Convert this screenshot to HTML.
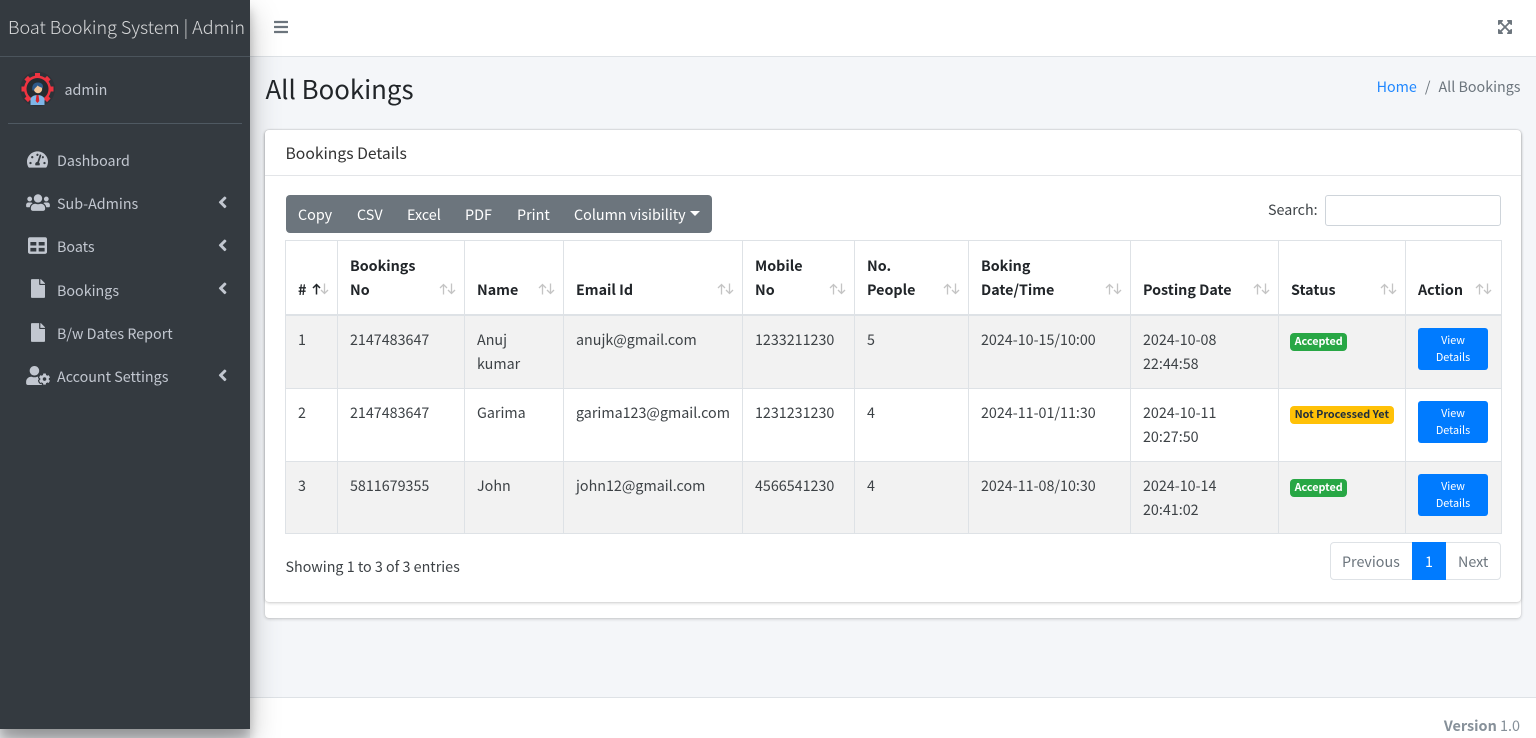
<!DOCTYPE html>
<html><head><meta charset="utf-8"><title>All Bookings</title>
<style>
*{box-sizing:border-box}
html{background:#f4f6f9}
html,body{margin:0;padding:0;width:1536px;height:738px;overflow:hidden}
body{font-family:"Noto Sans CJK JP","Liberation Sans",sans-serif;font-size:14.3px;line-height:24px;color:#212529;position:relative;background:#f4f6f9;filter:blur(.3px)}
.a{position:absolute;white-space:nowrap}
svg{position:absolute;display:block}
#nav{left:250px;top:0;width:1286px;height:57px;background:#fff;border-bottom:1px solid #dee2e6}
#foot{left:250px;top:697px;width:1286px;height:41px;background:#fff;border-top:1px solid #dee2e6}
#side{left:0;top:0;width:250px;height:729px;background:#343a40;box-shadow:0 14px 28px rgba(0,0,0,.25),0 10px 10px rgba(0,0,0,.22)}
.m{color:#c2c7d0;left:57px}
.card{left:265px;width:1256px;background:#fff;border-radius:4px;box-shadow:0 0 1px rgba(0,0,0,.125),0 1px 3px rgba(0,0,0,.2)}
table{position:absolute;left:285px;top:240px;width:1216px;border-collapse:collapse;table-layout:fixed;color:#3d4246}
th,td{border:1px solid #dee2e6;vertical-align:top;text-align:left;font-weight:400;line-height:24px;position:relative}
th{vertical-align:bottom;font-weight:700;color:#212529;border-bottom-width:2px;height:74px;padding:11px 12px 12px 12px}
tbody tr:nth-child(odd) td{background:#f2f2f2}
tbody tr{height:73px}
tbody tr:last-child{height:72px}
td{padding:12.500px 12px 11.500px}
tbody tr:last-child td{padding-bottom:10.500px}
.s{position:absolute;right:8px;bottom:19px;width:17px;height:12px}
.badge{position:absolute;left:11px;top:17px;height:18px;border-radius:4px;font-size:10.800px;font-weight:700;line-height:17px;padding:0 4.600px;white-space:nowrap}
.g{background:#28a745;color:#fff}.y{background:#ffc107;color:#1f2d3d}
.v{position:absolute;left:12px;top:12px;width:70px;height:42px;background:#007bff;border-radius:3px;color:#fff;font-size:10.800px;line-height:17.500px;text-align:center;padding-top:4px}
.b{color:#fff;top:203px;font-size:14.350px}
</style></head><body>

<div class="a" id="nav"></div>
<svg style="left:274px;top:19px" width="14" height="16" viewBox="0 0 448 512" fill="#6c757d"><path d="M16 132h416c8.837 0 16-7.163 16-16V76c0-8.837-7.163-16-16-16H16C7.163 60 0 67.163 0 76v40c0 8.837 7.163 16 16 16zm0 160h416c8.837 0 16-7.163 16-16v-40c0-8.837-7.163-16-16-16H16c-8.837 0-16 7.163-16 16v40c0 8.837 7.163 16 16 16zm0 160h416c8.837 0 16-7.163 16-16v-40c0-8.837-7.163-16-16-16H16c-8.837 0-16 7.163-16 16v40c0 8.837 7.163 16 16 16z"/></svg>
<svg style="left:1498px;top:19px" width="14" height="16" viewBox="0 0 448 512" fill="#6c757d"><path d="M448 344v112a23.94 23.94 0 0 1-24 24H312c-21.39 0-32.09-25.9-17-41l36.2-36.2L224 295.6 116.77 402.9 153 439c15.09 15.1 4.39 41-17 41H24a23.94 23.94 0 0 1-24-24V344c0-21.4 25.89-32.1 41-17l36.19 36.2L184.46 256 77.18 148.7 41 185c-15.1 15.1-41 4.4-41-17V56a23.94 23.94 0 0 1 24-24h112c21.39 0 32.09 25.9 17 41l-36.2 36.2L224 216.4l107.23-107.3L295 73c-15.09-15.1-4.39-41 17-41h112a23.94 23.94 0 0 1 24 24v112c0 21.4-25.89 32.1-41 17l-36.19-36.2L263.54 256l107.28 107.3L407 327.1c15.1-15.2 41-4.5 41 16.9z"/></svg>

<div class="a" id="foot"></div>
<div class="a" style="right:16px;top:714px;color:#869099;font-size:14.400px"><b>Version</b> 1.0</div>

<div class="a" id="side"></div>
<div class="a" style="left:8px;top:12px;font-size:17.950px;line-height:30px;font-weight:300;color:rgba(255,255,255,.8)">Boat Booking System | Admin</div>
<div class="a" style="left:0;top:56px;width:250px;height:1px;background:#4b545c"></div>
<svg style="left:19.500px;top:70px" width="35" height="38" viewBox="0 0 35 38">
<circle cx="17.500" cy="19" r="17.500" fill="#2d3238"/>
<g fill="#ef3340"><circle cx="17.500" cy="19" r="13.500"/><rect x="15" y="3" width="5" height="5"/><rect x="15" y="30" width="5" height="5"/><rect x="1.500" y="16.500" width="5" height="5"/><rect x="28.500" y="16.500" width="5" height="5"/><rect x="15" y="3" width="5" height="5" transform="rotate(45 17.500 19)"/><rect x="15" y="30" width="5" height="5" transform="rotate(45 17.500 19)"/><rect x="1.500" y="16.500" width="5" height="5" transform="rotate(45 17.500 19)"/><rect x="28.500" y="16.500" width="5" height="5" transform="rotate(45 17.500 19)"/></g>
<circle cx="17.500" cy="19" r="11" fill="#262b30"/>
<path d="M10.500 35v-5.500c0-2.500 3-4.500 7-4.500s7 2 7 4.500V35z" fill="#7fb5e6"/>
<path d="M16.500 25h2l.8 6-1.800 2-1.800-2z" fill="#d8232a"/>
<circle cx="18" cy="19" r="4.200" fill="#f2c79c"/>
<path d="M12.500 20.500c-1.200-5 1.500-8.500 6-8 3 .3 5 2 4.500 5.500-2-.5-4-1.200-5.500-2.500-1 2-3 2.200-3.500 5z" fill="#2f5a8a"/>
</svg>
<div class="a" style="left:64.500px;top:78px;color:#c2c7d0">admin</div>
<div class="a" style="left:8px;top:123px;width:234px;height:1px;background:#4f5962"></div>

<svg style="left:27px;top:150px" width="21" height="19" viewBox="0 0 576 512" fill="#c2c7d0"><path d="M288 32C128.940 32 0 160.940 0 320c0 52.800 14.250 102.260 39.060 144.800 5.610 9.620 16.300 15.200 27.440 15.200h443c11.140 0 21.830-5.580 27.440-15.200C561.750 422.260 576 372.800 576 320c0-159.060-128.940-288-288-288zm0 64c14.710 0 26.580 10.130 30.320 23.650-1.110 2.260-2.640 4.230-3.450 6.670l-9.220 27.670c-5.130 3.490-10.970 6.010-17.640 6.010-17.670 0-32-14.330-32-32S270.330 96 288 96zM96 384c-17.670 0-32-14.330-32-32s14.330-32 32-32 32 14.330 32 32-14.330 32-32 32zm48-160c-17.670 0-32-14.330-32-32s14.330-32 32-32 32 14.330 32 32-14.330 32-32 32zm246.770-72.410l-61.330 184C343.130 347.330 352 364.540 352 384c0 11.720-3.380 22.550-8.880 32H232.880c-5.500-9.450-8.880-20.280-8.880-32 0-33.940 26.500-61.430 59.900-63.590l61.340-184.010c4.170-12.560 17.730-19.450 30.360-15.170 12.570 4.190 19.350 17.790 15.170 30.360zm14.660 57.200l15.520-46.550c3.470-1.290 7.130-2.230 11.050-2.230 17.670 0 32 14.330 32 32s-14.330 32-32 32c-11.380-.01-20.890-6.280-26.570-15.220zM480 384c-17.670 0-32-14.330-32-32s14.330-32 32-32 32 14.330 32 32-14.330 32-32 32z"/></svg>
<div class="a m" style="top:148.500px">Dashboard</div>

<svg style="left:26px;top:193px" width="24" height="19" viewBox="0 0 640 512" fill="#c2c7d0"><path d="M96 224c35.300 0 64-28.700 64-64s-28.700-64-64-64-64 28.700-64 64 28.700 64 64 64zm448 0c35.300 0 64-28.700 64-64s-28.700-64-64-64-64 28.700-64 64 28.700 64 64 64zm32 32h-64c-17.600 0-33.500 7.100-45.100 18.600 40.300 22.100 68.900 62 75.100 109.400h66c17.700 0 32-14.300 32-32v-32c0-35.300-28.700-64-64-64zm-256 0c61.900 0 112-50.100 112-112S381.900 32 320 32 208 82.100 208 144s50.100 112 112 112zm76.800 32h-8.300c-20.800 10-43.900 16-68.500 16s-47.600-6-68.500-16h-8.300C179.600 288 128 339.600 128 403.200V432c0 26.500 21.500 48 48 48h288c26.500 0 48-21.500 48-48v-28.800c0-63.600-51.600-115.200-115.200-115.200zm-223.700-13.400C161.500 263.100 145.600 256 128 256H64c-35.300 0-64 28.700-64 64v32c0 17.700 14.300 32 32 32h65.900c6.300-47.400 34.900-87.300 75.200-109.400z"/></svg>
<div class="a m" style="top:192px">Sub-Admins</div>

<svg style="left:28px;top:236px" width="19" height="19" viewBox="0 0 512 512" fill="#c2c7d0"><path d="M464 32H48C21.490 32 0 53.490 0 80v352c0 26.510 21.490 48 48 48h416c26.510 0 48-21.490 48-48V80c0-26.510-21.490-48-48-48zM224 416H64v-96h160v96zm0-160H64v-96h160v96zm224 160H288v-96h160v96zm0-160H288v-96h160v96z"/></svg>
<div class="a m" style="top:235px">Boats</div>

<svg style="left:31px;top:279px" width="14" height="19" viewBox="0 0 384 512" fill="#c2c7d0"><path d="M224 136V0H24C10.700 0 0 10.700 0 24v464c0 13.300 10.700 24 24 24h336c13.300 0 24-10.700 24-24V160H248c-13.200 0-24-10.800-24-24zm160-14.100v6.100H256V0h6.100c6.400 0 12.500 2.500 17 7l97.900 98c4.500 4.500 7 10.600 7 16.900z"/></svg>
<div class="a m" style="top:278.500px">Bookings</div>

<svg style="left:31px;top:323px" width="14" height="19" viewBox="0 0 384 512" fill="#c2c7d0"><path d="M224 136V0H24C10.700 0 0 10.700 0 24v464c0 13.300 10.700 24 24 24h336c13.300 0 24-10.700 24-24V160H248c-13.200 0-24-10.800-24-24zm160-14.100v6.100H256V0h6.100c6.400 0 12.500 2.500 17 7l97.900 98c4.500 4.500 7 10.600 7 16.900z"/></svg>
<div class="a m" style="top:322px">B/w Dates Report</div>

<svg style="left:26px;top:366px" width="24" height="19" viewBox="0 0 640 512" fill="#c2c7d0"><path d="M610.500 373.300c2.600-14.100 2.600-28.500 0-42.600l25.800-14.900c3-1.700 4.300-5.200 3.300-8.500-6.700-21.600-18.200-41.200-33.200-57.400-2.300-2.500-6-3.100-9-1.400l-25.800 14.900c-10.900-9.300-23.400-16.500-36.900-21.300v-29.800c0-3.400-2.400-6.400-5.700-7.100-22.300-5-45-4.800-66.200 0-3.300.7-5.700 3.700-5.700 7.100v29.800c-13.500 4.800-26 12-36.900 21.300l-25.800-14.900c-2.900-1.700-6.700-1.100-9 1.400-15 16.200-26.500 35.800-33.200 57.400-1 3.300.4 6.800 3.300 8.500l25.800 14.900c-2.600 14.100-2.600 28.500 0 42.600l-25.800 14.900c-3 1.700-4.300 5.200-3.300 8.500 6.700 21.600 18.200 41.100 33.200 57.400 2.300 2.500 6 3.100 9 1.400l25.800-14.900c10.900 9.300 23.400 16.500 36.900 21.300v29.800c0 3.400 2.400 6.400 5.700 7.100 22.300 5 45 4.800 66.200 0 3.300-.7 5.700-3.700 5.700-7.100v-29.800c13.500-4.800 26-12 36.900-21.300l25.800 14.900c2.900 1.700 6.700 1.100 9-1.400 15-16.200 26.500-35.800 33.200-57.400 1-3.300-.4-6.800-3.300-8.500l-25.800-14.900zM496 400.500c-26.800 0-48.500-21.800-48.500-48.500s21.800-48.500 48.500-48.500 48.500 21.800 48.500 48.500-21.700 48.500-48.500 48.500zM224 256c70.700 0 128-57.300 128-128S294.700 0 224 0 96 57.300 96 128s57.300 128 128 128zm201.200 226.500c-2.300-1.200-4.600-2.600-6.800-3.900l-7.900 4.600c-6 3.400-12.800 5.300-19.600 5.300-10.900 0-21.400-4.600-28.900-12.600-18.300-19.800-32.300-43.900-40.200-69.600-5.500-17.700 1.900-36.400 17.900-45.700l7.900-4.600c-.1-2.600-.1-5.200 0-7.800l-7.900-4.600c-16-9.200-23.400-28-17.900-45.700.9-2.900 2.200-5.800 3.200-8.700-3.800-.3-7.500-1.200-11.400-1.200h-16.700c-22.200 10.200-46.900 16-72.900 16s-50.600-5.800-72.900-16h-16.700C60.200 288 0 348.200 0 422.400V464c0 26.500 21.500 48 48 48h352c10.100 0 19.500-3.200 27.200-8.500-1.200-3.800-2-7.700-2-11.800v-9.200z"/></svg>
<div class="a m" style="top:365px">Account Settings</div>

<svg style="left:217.600px;top:192.700px" width="9.300" height="18.600" viewBox="0 0 256 512" fill="#c2c7d0"><path d="M31.700 239l136-136c9.400-9.400 24.600-9.400 33.900 0l22.600 22.600c9.400 9.400 9.400 24.600 0 33.900L127.900 256l96.400 96.400c9.400 9.400 9.400 24.600 0 33.900L201.700 409c-9.400 9.400-24.600 9.400-33.900 0l-136-136c-9.500-9.400-9.500-24.600-.1-34z"/></svg>
<svg style="left:217.600px;top:236px" width="9.300" height="18.600" viewBox="0 0 256 512" fill="#c2c7d0"><path d="M31.700 239l136-136c9.400-9.400 24.600-9.400 33.900 0l22.600 22.600c9.400 9.400 9.400 24.600 0 33.900L127.900 256l96.400 96.400c9.400 9.400 9.400 24.600 0 33.900L201.700 409c-9.400 9.400-24.600 9.400-33.900 0l-136-136c-9.500-9.400-9.500-24.600-.1-34z"/></svg>
<svg style="left:217.600px;top:279.300px" width="9.300" height="18.600" viewBox="0 0 256 512" fill="#c2c7d0"><path d="M31.700 239l136-136c9.400-9.400 24.600-9.400 33.900 0l22.600 22.600c9.400 9.400 9.400 24.600 0 33.900L127.900 256l96.400 96.400c9.400 9.400 9.400 24.600 0 33.900L201.700 409c-9.400 9.400-24.600 9.400-33.900 0l-136-136c-9.500-9.400-9.500-24.600-.1-34z"/></svg>
<svg style="left:217.600px;top:365.700px" width="9.300" height="18.600" viewBox="0 0 256 512" fill="#c2c7d0"><path d="M31.700 239l136-136c9.400-9.400 24.600-9.400 33.900 0l22.600 22.600c9.400 9.400 9.400 24.600 0 33.900L127.900 256l96.400 96.400c9.400 9.400 9.400 24.600 0 33.900L201.700 409c-9.400 9.400-24.600 9.400-33.900 0l-136-136c-9.500-9.400-9.500-24.600-.1-34z"/></svg>

<div class="a" style="left:265.500px;top:74px;font-size:25.800px;line-height:30px;color:#212529">All Bookings</div>
<div class="a" style="right:15.500px;top:75px"><span style="color:#1f87ff">Home</span><span style="color:#6c757d;padding:0 8px">/</span><span style="color:#6c757d">All Bookings</span></div>

<div class="a card" style="top:129.500px;height:488.500px"></div>
<div class="a card" style="top:129.500px;height:472.500px"></div>
<div class="a" style="left:265px;top:175px;width:1256px;height:1px;background:#e3e5e8"></div>
<div class="a" style="left:285.500px;top:140.500px;font-size:15.700px;color:#333">Bookings Details</div>

<div class="a" style="left:286px;top:195px;width:426px;height:38px;background:#6c757d;border-radius:4px"></div>
<div class="a b" style="left:298px">Copy</div>
<div class="a b" style="left:357px">CSV</div>
<div class="a b" style="left:407px">Excel</div>
<div class="a b" style="left:465px">PDF</div>
<div class="a b" style="left:517px">Print</div>
<div class="a b" style="left:574px">Column visibility</div>
<div class="a" style="left:690px;top:211px;width:0;height:0;border-top:5px solid #fff;border-left:5px solid transparent;border-right:5px solid transparent"></div>

<div class="a" style="left:1268px;top:198px;color:#3d4246">Search:</div>
<div class="a" style="left:1325px;top:195px;width:176px;height:31px;background:#fff;border:1px solid #ced4da;border-radius:3px"></div>

<svg width="0" height="0" style="position:absolute"><defs><g id="sa"><path d="M4.500 11.500V1.500M1 5l3.500-3.500L8 5M12.500 .5v10M9 7l3.500 3.500L16 7" fill="none" stroke="#c4c4c4" stroke-width="1.300"/></g></defs></svg>

<table>
<colgroup><col style="width:52px"><col style="width:127px"><col style="width:99px"><col style="width:179px"><col style="width:112px"><col style="width:114px"><col style="width:162px"><col style="width:148px"><col style="width:127px"><col style="width:96px"></colgroup>
<thead><tr>
<th># <svg class="s" viewBox="0 0 17 12" style="right:8px"><path d="M4.500 11.500V1.500M1 5l3.500-3.500L8 5" fill="none" stroke="#212529" stroke-width="1.500"/><path d="M12.500 .5v10M9 7l3.500 3.500L16 7" fill="none" stroke="#c4c4c4" stroke-width="1.300"/></svg></th>
<th>Bookings<br>No<svg class="s" viewBox="0 0 17 12"><use href="#sa"/></svg></th>
<th>Name<svg class="s" viewBox="0 0 17 12"><use href="#sa"/></svg></th>
<th>Email Id<svg class="s" viewBox="0 0 17 12"><use href="#sa"/></svg></th>
<th>Mobile<br>No<svg class="s" viewBox="0 0 17 12"><use href="#sa"/></svg></th>
<th>No.<br>People<svg class="s" viewBox="0 0 17 12"><use href="#sa"/></svg></th>
<th>Boking<br>Date/Time<svg class="s" viewBox="0 0 17 12"><use href="#sa"/></svg></th>
<th>Posting Date<svg class="s" viewBox="0 0 17 12"><use href="#sa"/></svg></th>
<th>Status<svg class="s" viewBox="0 0 17 12"><use href="#sa"/></svg></th>
<th>Action<svg class="s" viewBox="0 0 17 12" style="right:9px"><use href="#sa"/></svg></th>
</tr></thead>
<tbody>
<tr><td>1</td><td>2147483647</td><td>Anuj<br>kumar</td><td>anujk@gmail.com</td><td>1233211230</td><td>5</td><td>2024-10-15/10:00</td><td>2024-10-08<br>22:44:58</td><td><span class="badge g">Accepted</span></td><td><div class="v">View<br>Details</div></td></tr>
<tr><td>2</td><td>2147483647</td><td>Garima</td><td>garima123@gmail.com</td><td>1231231230</td><td>4</td><td>2024-11-01/11:30</td><td>2024-10-11<br>20:27:50</td><td><span class="badge y">Not Processed Yet</span></td><td><div class="v">View<br>Details</div></td></tr>
<tr><td>3</td><td>5811679355</td><td>John</td><td>john12@gmail.com</td><td>4566541230</td><td>4</td><td>2024-11-08/10:30</td><td>2024-10-14<br>20:41:02</td><td><span class="badge g">Accepted</span></td><td><div class="v">View<br>Details</div></td></tr>
</tbody>
</table>

<div class="a" style="left:285.500px;top:554.500px;color:#3d4246">Showing 1 to 3 of 3 entries</div>
<div class="a" style="left:1330px;top:542px;width:171px;height:38px;background:#fff;border:1px solid #dee2e6;border-radius:4px"></div>
<div class="a" style="left:1412px;top:542px;width:34px;height:38px;background:#007bff"></div>
<div class="a" style="left:1342px;top:550px;color:#6c757d">Previous</div>
<div class="a" style="left:1425px;top:550px;color:#fff">1</div>
<div class="a" style="left:1458px;top:550px;color:#6c757d">Next</div>
</body></html>
